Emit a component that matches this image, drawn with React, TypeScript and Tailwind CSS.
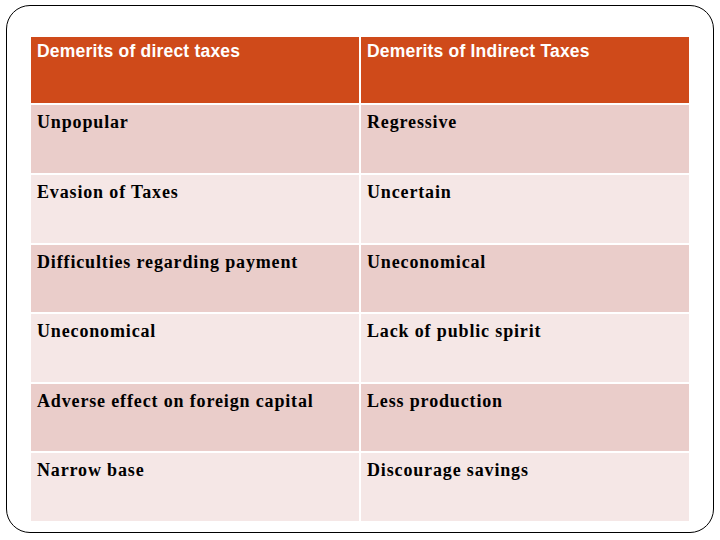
const rows = [
  ["Unpopular", "Regressive"],
  ["Evasion of Taxes", "Uncertain"],
  ["Difficulties regarding payment", "Uneconomical"],
  ["Uneconomical", "Lack of public spirit"],
  ["Adverse effect on foreign capital", "Less production"],
  ["Narrow base", "Discourage savings"],
];

export default function App() {
  return (
    <div className="w-[720px] h-[540px] bg-white pt-[5px] pl-[6px]">
      <div className="w-[708px] h-[528px] border border-black rounded-[24px] pl-[24px] pt-[31px]">
        <div className="grid grid-cols-[328px_328px] grid-rows-[66px_68px_68px_67px_68px_67px_68px] gap-[2px] w-[658px]">
          <div className="bg-[#cf4a1a] text-white font-bold text-[17.5px] px-[6px] pt-[1px] font-['Liberation_Sans',Arial,sans-serif] tracking-[0.2px]">
            Demerits of direct taxes
          </div>
          <div className="bg-[#cf4a1a] text-white font-bold text-[17.5px] px-[6px] pt-[1px] font-['Liberation_Sans',Arial,sans-serif] tracking-[0.2px]">
            Demerits of Indirect Taxes
          </div>
          {rows.map((r, i) =>
            r.map((cell, j) => (
              <div
                key={`${i}-${j}`}
                className={`${i % 2 === 0 ? "bg-[#eacdca]" : "bg-[#f5e7e6]"} text-black font-bold text-[18px] tracking-[0.85px] px-[6px] pt-[4px] font-['Liberation_Serif','Times_New_Roman',serif]`}
              >
                {cell}
              </div>
            ))
          )}
        </div>
      </div>
    </div>
  );
}
